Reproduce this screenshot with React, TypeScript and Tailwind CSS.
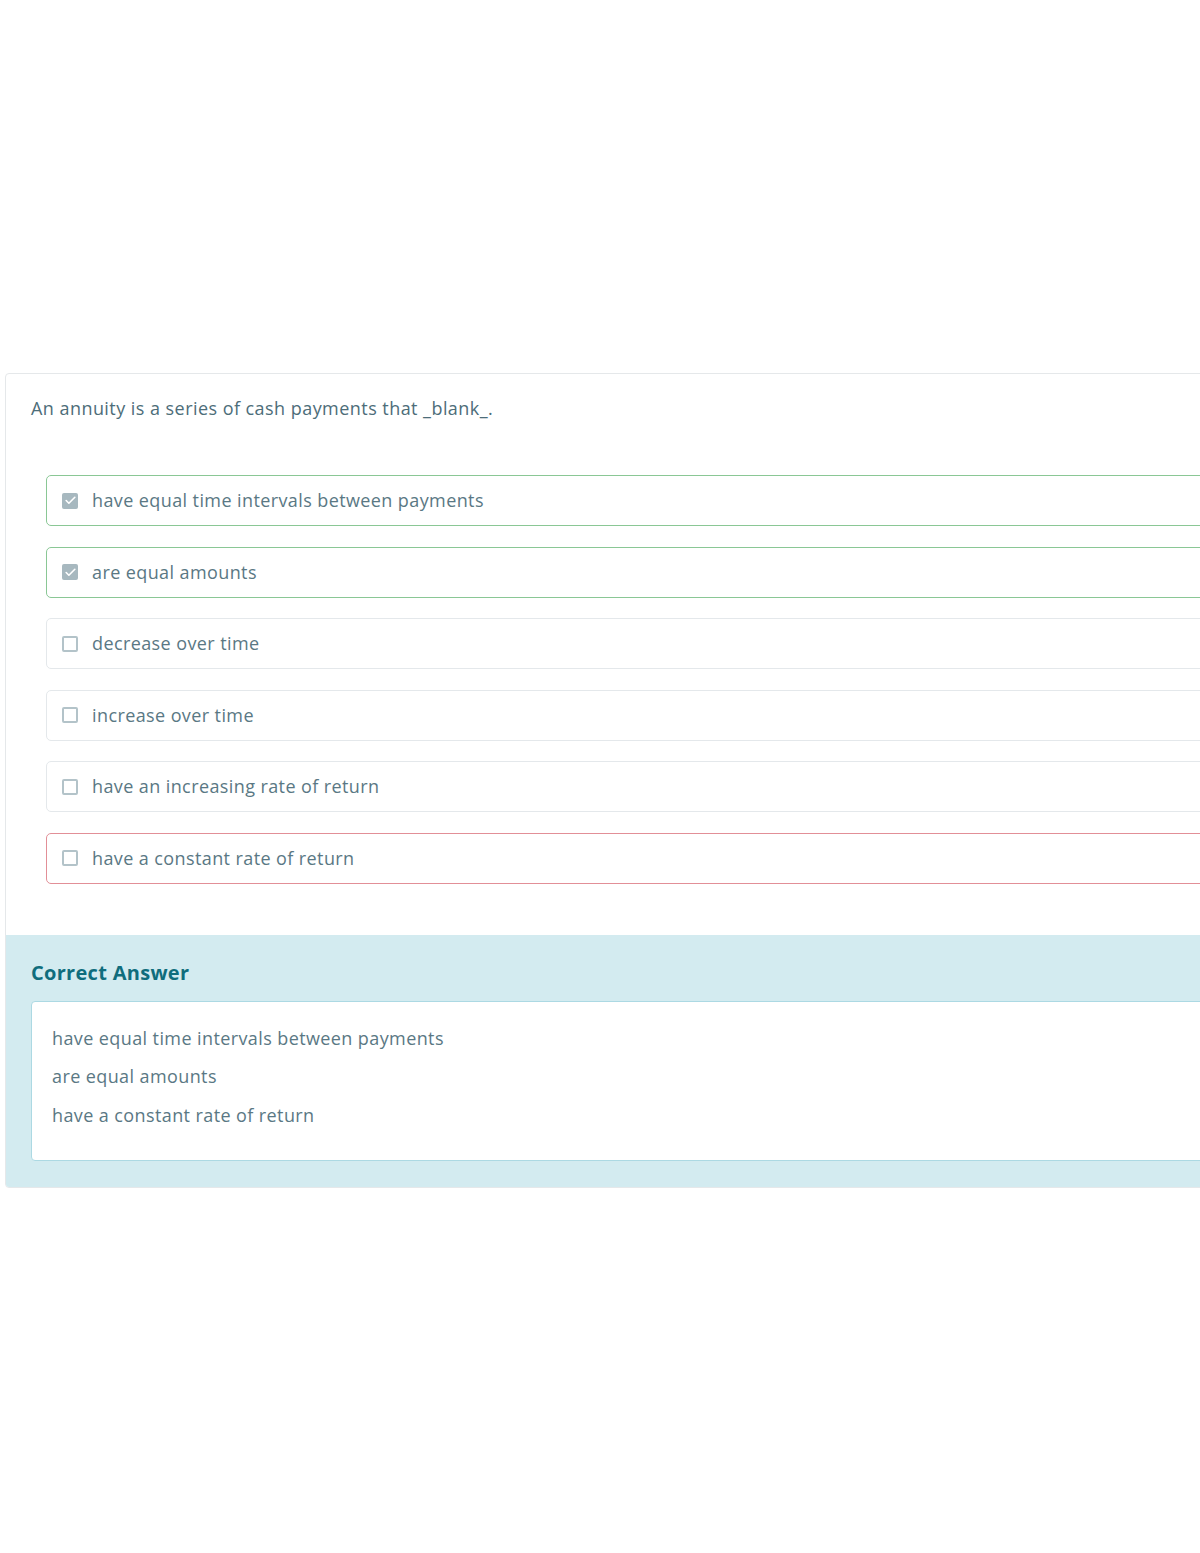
import { Check } from 'lucide-react';

type Option = {
    label: string;
    checked: boolean;
    state: 'correct' | 'wrong' | 'none';
};

const options: Option[] = [
    { label: 'have equal time intervals between payments', checked: true, state: 'correct' },
    { label: 'are equal amounts', checked: true, state: 'correct' },
    { label: 'decrease over time', checked: false, state: 'none' },
    { label: 'increase over time', checked: false, state: 'none' },
    { label: 'have an increasing rate of return', checked: false, state: 'none' },
    { label: 'have a constant rate of return', checked: false, state: 'wrong' },
];

const answers = [
    'have equal time intervals between payments',
    'are equal amounts',
    'have a constant rate of return',
];

const borderFor = (state: Option['state']) => {
    if (state === 'correct') return 'border-[#8ac795]';
    if (state === 'wrong') return 'border-[#e28f97]';
    return 'border-[#e4e8eb]';
};

const Box = ({ checked }: { checked: boolean }) =>
    checked ? (
        <span className="w-4 h-4 rounded-[2px] bg-[#a7b8bf] flex items-center justify-center shrink-0">
            <Check size={13} strokeWidth={3} className="text-white" />
        </span>
    ) : (
        <span className="w-4 h-4 rounded-[2px] border-2 border-[#b3c3c9] bg-white shrink-0" />
    );

export default function App() {
    return (
        <div
            className="min-h-screen bg-white overflow-hidden pt-[373px] pl-[5px]"
            style={{ fontFamily: '"Open Sans", Lato, sans-serif' }}
        >
            <div className="w-[1260px] bg-white border border-[#e5e8ea] rounded-[4px] overflow-hidden">
                <div className="pl-[25px] pt-[22px] pb-[51px]">
                    <p className="text-[18px] tracking-[0.45px] text-[#4d6d79] leading-[24px]">
                        An annuity is a series of cash payments that _blank_.
                    </p>

                    <div className="mt-[55px] ml-[15px] flex flex-col gap-[20.5px]">
                        {options.map((opt) => (
                            <div
                                key={opt.label}
                                className={`h-[51px] flex items-center gap-[14px] pl-[15px] border rounded-[5px] ${borderFor(opt.state)}`}
                            >
                                <Box checked={opt.checked} />
                                <span className="text-[18px] tracking-[0.4px] text-[#5a7884]">{opt.label}</span>
                            </div>
                        ))}
                    </div>
                </div>

                <div className="bg-[#d3ebf0] pl-[25px] pt-[24px] pb-[26px]">
                    <h3 className="text-[20px] font-bold tracking-[0.3px] text-[#0f6d7d] leading-[28px]">Correct Answer</h3>
                    <div className="mt-[14px] bg-white border border-[#acd9e3] rounded-[4px] pl-[20px] pt-[24px] pb-[33px] flex flex-col gap-[14.5px]">
                        {answers.map((a) => (
                            <p key={a} className="text-[18px] tracking-[0.4px] text-[#5a7884] leading-[24px]">
                                {a}
                            </p>
                        ))}
                    </div>
                </div>
            </div>
        </div>
    );
}
